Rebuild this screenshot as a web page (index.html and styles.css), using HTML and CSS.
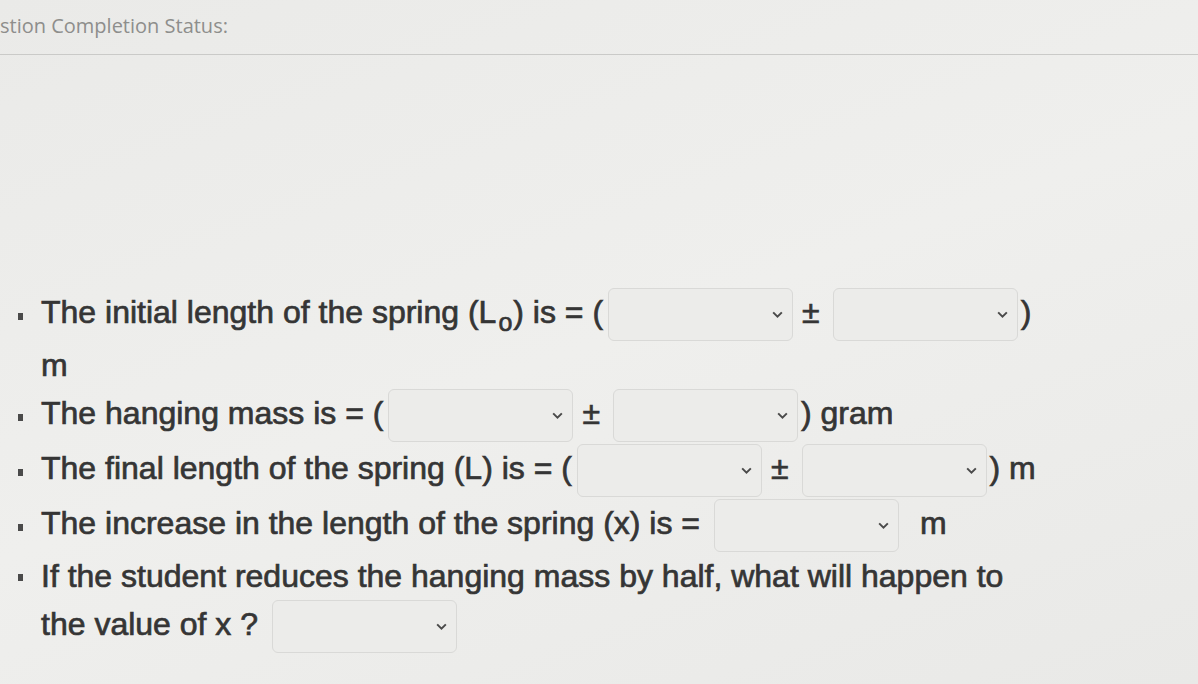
FILE: index.html
```html
<!DOCTYPE html>
<html>
<head>
<meta charset="utf-8">
<link rel="stylesheet" href="styles.css">
</head>
<body>
<header class="status">
  <span class="status-text">stion Completion Status:</span>
</header>
<main class="content">
  <ul class="questions">
    <li class="q1">The initial length of the spring (L<span class="sub">o</span>) is = (<span class="sel"><svg viewBox="0 0 12 8"><path d="M2 2 L6 6 L10 2"/></svg></span><span class="pm">±</span><span class="keep"><span class="sel"><svg viewBox="0 0 12 8"><path d="M2 2 L6 6 L10 2"/></svg></span>)</span> m</li>
    <li>The hanging mass is = (<span class="sel"><svg viewBox="0 0 12 8"><path d="M2 2 L6 6 L10 2"/></svg></span><span class="pm">±</span><span class="sel"><svg viewBox="0 0 12 8"><path d="M2 2 L6 6 L10 2"/></svg></span>) gram</li>
    <li>The final length of the spring (L) is = (<span class="sel"><svg viewBox="0 0 12 8"><path d="M2 2 L6 6 L10 2"/></svg></span><span class="pm">±</span><span class="sel"><svg viewBox="0 0 12 8"><path d="M2 2 L6 6 L10 2"/></svg></span>) m</li>
    <li>The increase in the length of the spring (x) is = <span class="sel"><svg viewBox="0 0 12 8"><path d="M2 2 L6 6 L10 2"/></svg></span><span class="unit">m</span></li>
    <li class="q5">If the student reduces the hanging mass by half, what will happen to the value of x ? <span class="sel"><svg viewBox="0 0 12 8"><path d="M2 2 L6 6 L10 2"/></svg></span></li>
  </ul>
</main>
</body>
</html>
```

FILE: styles.css
```css
html, body {
  margin: 0;
  padding: 0;
}
body {
  width: 1198px;
  height: 684px;
  overflow: hidden;
  background: linear-gradient(160deg, #eaeae8 0%, #efefed 50%, #e9e9e7 100%);
  font-family: "Liberation Sans", Arial, sans-serif;
  color: #353535;
}
.status {
  height: 55px;
  border-bottom: 1.5px solid #cacac8;
  box-sizing: border-box;
  overflow: hidden;
  white-space: nowrap;
}
.status-text {
  display: inline-block;
  padding-top: 12px;
  font-family: "Open Sans", sans-serif;
  font-size: 20px;
  color: #8e8e8c;
}
.content {
  padding-top: 232px;
}
.questions {
  margin: 0;
  padding: 0 0 0 41px;
  list-style: none;
  font-size: 32px;
  line-height: 46px;
  -webkit-text-stroke: 0.7px #353535;
}
.questions li {
  position: relative;
  width: 1080px;
}
.questions li.q1 {
  width: 1000px;
}
.questions li.q5 {
  width: 980px;
}
.questions li::before {
  content: "";
  position: absolute;
  left: -23px;
  top: 26px;
  width: 5px;
  height: 7px;
  background: #4a4a4a;
}
.questions li.q5::before {
  top: 21px;
}
.keep {
  white-space: nowrap;
}
.sub {
  display: inline-block;
  font-size: 25px;
  line-height: 18px;
  vertical-align: -8px;
  margin: 0 1px 0 2px;
}
.sel {
  display: inline-flex;
  align-items: center;
  justify-content: flex-end;
  box-sizing: border-box;
  width: 185px;
  height: 53px;
  vertical-align: middle;
  margin: 1px 3px 1px 5px;
  padding-right: 8px;
  border: 1.5px solid #d9d9d7;
  border-radius: 6px;
  background: #ececea;
  -webkit-text-stroke: 0;
}
.sel svg {
  width: 13px;
  height: 9px;
  fill: none;
  stroke: #4a4a4a;
  stroke-width: 1.8;
}
.pm {
  margin: 0 8px 0 6px;
}
.unit {
  margin-left: 18px;
}
```
